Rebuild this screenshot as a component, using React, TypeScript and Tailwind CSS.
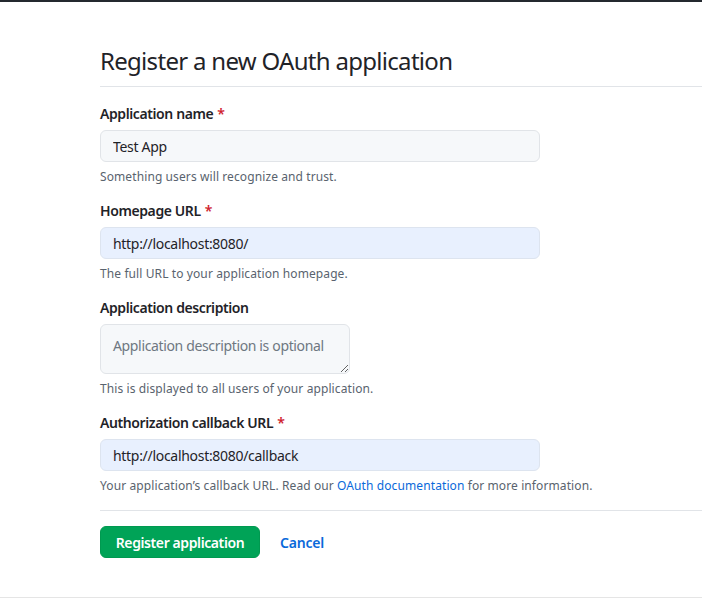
import { useState } from 'react';

type FieldProps = {
  label: string;
  required?: boolean;
  value: string;
  autofilled?: boolean;
  hint: React.ReactNode;
  onChange: (v: string) => void;
};

function Field({ label, required, value, autofilled, hint, onChange }: FieldProps) {
  return (
    <div className="mb-[15px]">
      <label className="block text-[14px] font-semibold text-[#1f2328] leading-[20px] mb-[6px] tracking-[-0.4px]">
        {label}
        {required && <span className="text-[#cf222e] ml-[4px]">*</span>}
      </label>
      <input
        className={`w-[440px] h-[32px] px-[12px] text-[14px] tracking-[-0.3px] text-[#1f2328] rounded-[6px] border outline-none ${
          autofilled ? 'bg-[#e8f0fe] border-[#dde4ef]' : 'bg-[#f6f8fa] border-[#e1e4e8]'
        }`}
        value={value}
        onChange={(e) => onChange(e.target.value)}
      />
      <p className="text-[12px] text-[#59636e] leading-[18px] mt-[6px] tracking-[0.1px]">{hint}</p>
    </div>
  );
}

export default function App() {
  const [name, setName] = useState('Test App');
  const [homepage, setHomepage] = useState('http://localhost:8080/');
  const [description, setDescription] = useState('');
  const [callback, setCallback] = useState('http://localhost:8080/callback');

  return (
    <div className="w-[702px] h-[600px] bg-white overflow-hidden font-['Noto_Sans',sans-serif]">
      <div className="h-[2px] bg-[#24292f]" />
      <div className="h-[596px] border-b border-[#e5e5e5] pl-[100px]">
        <div className="pt-[42px] pb-[8px] border-b border-[#e1e4e8]">
          <h1 className="text-[24px] font-normal text-[#1f2328] leading-[34px] tracking-[-0.7px]">
            Register a new OAuth application
          </h1>
        </div>

        <form className="pt-[17px]" onSubmit={(e) => e.preventDefault()}>
          <Field
            label="Application name"
            required
            value={name}
            onChange={setName}
            hint="Something users will recognize and trust."
          />
          <Field
            label="Homepage URL"
            required
            autofilled
            value={homepage}
            onChange={setHomepage}
            hint="The full URL to your application homepage."
          />

          <div className="mb-[15px]">
            <label className="block text-[14px] font-semibold text-[#1f2328] leading-[20px] mb-[6px] tracking-[-0.4px]">
              Application description
            </label>
            <textarea
              className="block w-[250px] h-[50px] px-[12px] py-[10px] text-[14px] tracking-[-0.35px] text-[#1f2328] placeholder:text-[#6e7781] bg-[#f6f8fa] border border-[#e1e4e8] rounded-[6px] outline-none"
              placeholder="Application description is optional"
              value={description}
              onChange={(e) => setDescription(e.target.value)}
            />
            <p className="text-[12px] text-[#59636e] leading-[18px] mt-[6px] tracking-[0.1px]">
              This is displayed to all users of your application.
            </p>
          </div>

          <Field
            label="Authorization callback URL"
            required
            autofilled
            value={callback}
            onChange={setCallback}
            hint={
              <>
                Your application’s callback URL. Read our{' '}
                <a href="#" className="text-[#0969da]">OAuth documentation</a> for more information.
              </>
            }
          />

          <div className="border-t border-[#e1e4e8] mt-[5px] pt-[15px] flex items-center gap-[20px]">
            <button
              type="submit"
              className="h-[32px] w-[160px] rounded-[6px] bg-[#00a357] border border-[#009950] text-white text-[14px] font-semibold tracking-[-0.4px]"
            >
              Register application
            </button>
            <a href="#" className="text-[14px] font-semibold text-[#0969da] tracking-[-0.2px]">
              Cancel
            </a>
          </div>
        </form>
      </div>
    </div>
  );
}
